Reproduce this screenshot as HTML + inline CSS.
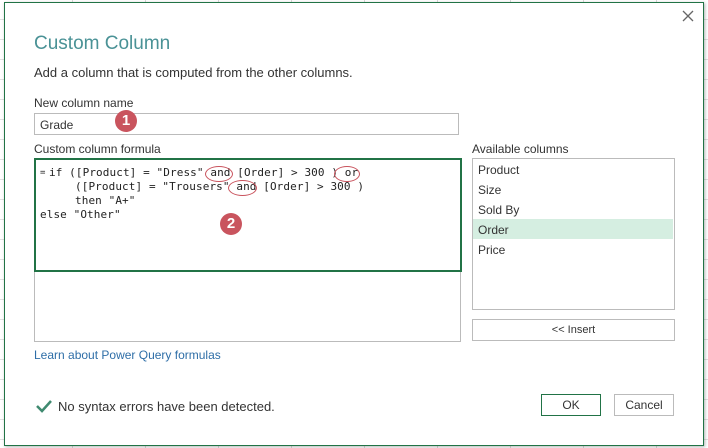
<!DOCTYPE html>
<html><head><style>
body{margin:0;width:708px;height:448px;overflow:hidden;position:relative;font-family:"Liberation Sans",sans-serif;
background:#fff;
background-image:linear-gradient(90deg,transparent 72px,#d8d8d8 72px,#d8d8d8 73px,transparent 73px),linear-gradient(0deg,#e0e0e0 1px,transparent 1px);
background-size:73px 448px,708px 20px;}
.a{position:absolute}
#dlg{position:absolute;left:4px;top:2px;width:698px;height:442px;border:1px solid #217346;background:#fff;box-shadow:1px 1px 3px rgba(0,0,0,.3)}
.t{position:absolute;color:#333;font-size:12px;white-space:nowrap}
.code{position:absolute;font-family:"DejaVu Sans Mono","Liberation Mono",monospace;font-size:11px;color:#222;white-space:pre;line-height:14px;letter-spacing:0.1px}
.ov{position:absolute;border:1.5px solid #c9545e;border-radius:50%}
.num{position:absolute;width:22px;height:22px;border-radius:50%;background:#c9545e;color:#fff;font-weight:bold;font-size:15px;text-align:center;line-height:22px}
</style></head><body>
<div id="dlg"></div>
<svg class="a" style="left:682px;top:10px" width="12" height="12"><path d="M1 1 L11 11 M11 1 L1 11" stroke="#666" stroke-width="1.3"/></svg>
<div class="t" style="left:34px;top:33px;font-size:19px;color:#4a9296">Custom Column</div>
<div class="t" style="left:34px;top:65px;font-size:13px">Add a column that is computed from the other columns.</div>
<div class="t" style="left:34px;top:96px">New column name</div>
<div class="a" style="left:34px;top:113px;width:423px;height:20px;border:1px solid #bbb"></div>
<div class="t" style="left:40px;top:118px">Grade</div>
<div class="num" style="left:115px;top:110px">1</div>
<div class="t" style="left:34px;top:142px">Custom column formula</div>
<div class="a" style="left:34px;top:158px;width:425px;height:182px;border:1px solid #bbb"></div>
<div class="a" style="left:34px;top:158px;width:424px;height:110px;border:2px solid #217346"></div>
<div class="code" style="left:40px;top:166px;font-size:9px">=</div>
<div class="code" style="left:49px;top:166px">if ([Product] = "Dress" and [Order] > 300 ) or</div>
<div class="code" style="left:75px;top:180px">([Product] = "Trousers" and [Order] > 300 )</div>
<div class="code" style="left:75px;top:194px">then "A+"</div>
<div class="code" style="left:40px;top:208px">else "Other"</div>
<div class="ov" style="left:205px;top:166px;width:26px;height:14px"></div>
<div class="ov" style="left:334px;top:166px;width:24px;height:14px"></div>
<div class="ov" style="left:228px;top:180px;width:27px;height:14px"></div>
<div class="num" style="left:220px;top:213px">2</div>
<div class="t" style="left:34px;top:348px;color:#2e6ea7">Learn about Power Query formulas</div>
<svg class="a" style="left:36px;top:399px" width="16" height="14"><path d="M1 7 L6 12 L15 2" stroke="#3f8a70" stroke-width="2.5" fill="none"/></svg>
<div class="t" style="left:58px;top:399px;font-size:13px">No syntax errors have been detected.</div>
<div class="t" style="left:472px;top:142px">Available columns</div>
<div class="a" style="left:472px;top:158px;width:201px;height:150px;border:1px solid #bbb"></div>
<div class="a" style="left:473px;top:219px;width:200px;height:20px;background:#d5eee1"></div>
<div class="t" style="left:478px;top:163px">Product</div>
<div class="t" style="left:478px;top:183px">Size</div>
<div class="t" style="left:478px;top:203px">Sold By</div>
<div class="t" style="left:478px;top:223px">Order</div>
<div class="t" style="left:478px;top:243px">Price</div>
<div class="a" style="left:472px;top:319px;width:201px;height:20px;border:1px solid #bbb;font-size:11px;text-align:center;line-height:20px;color:#333">&lt;&lt; Insert</div>
<div class="a" style="left:541px;top:394px;width:58px;height:20px;border:1px solid #217346;font-size:12px;text-align:center;line-height:20px;color:#333">OK</div>
<div class="a" style="left:614px;top:394px;width:58px;height:20px;border:1px solid #bbb;font-size:12px;text-align:center;line-height:20px;color:#333">Cancel</div>
</body></html>
